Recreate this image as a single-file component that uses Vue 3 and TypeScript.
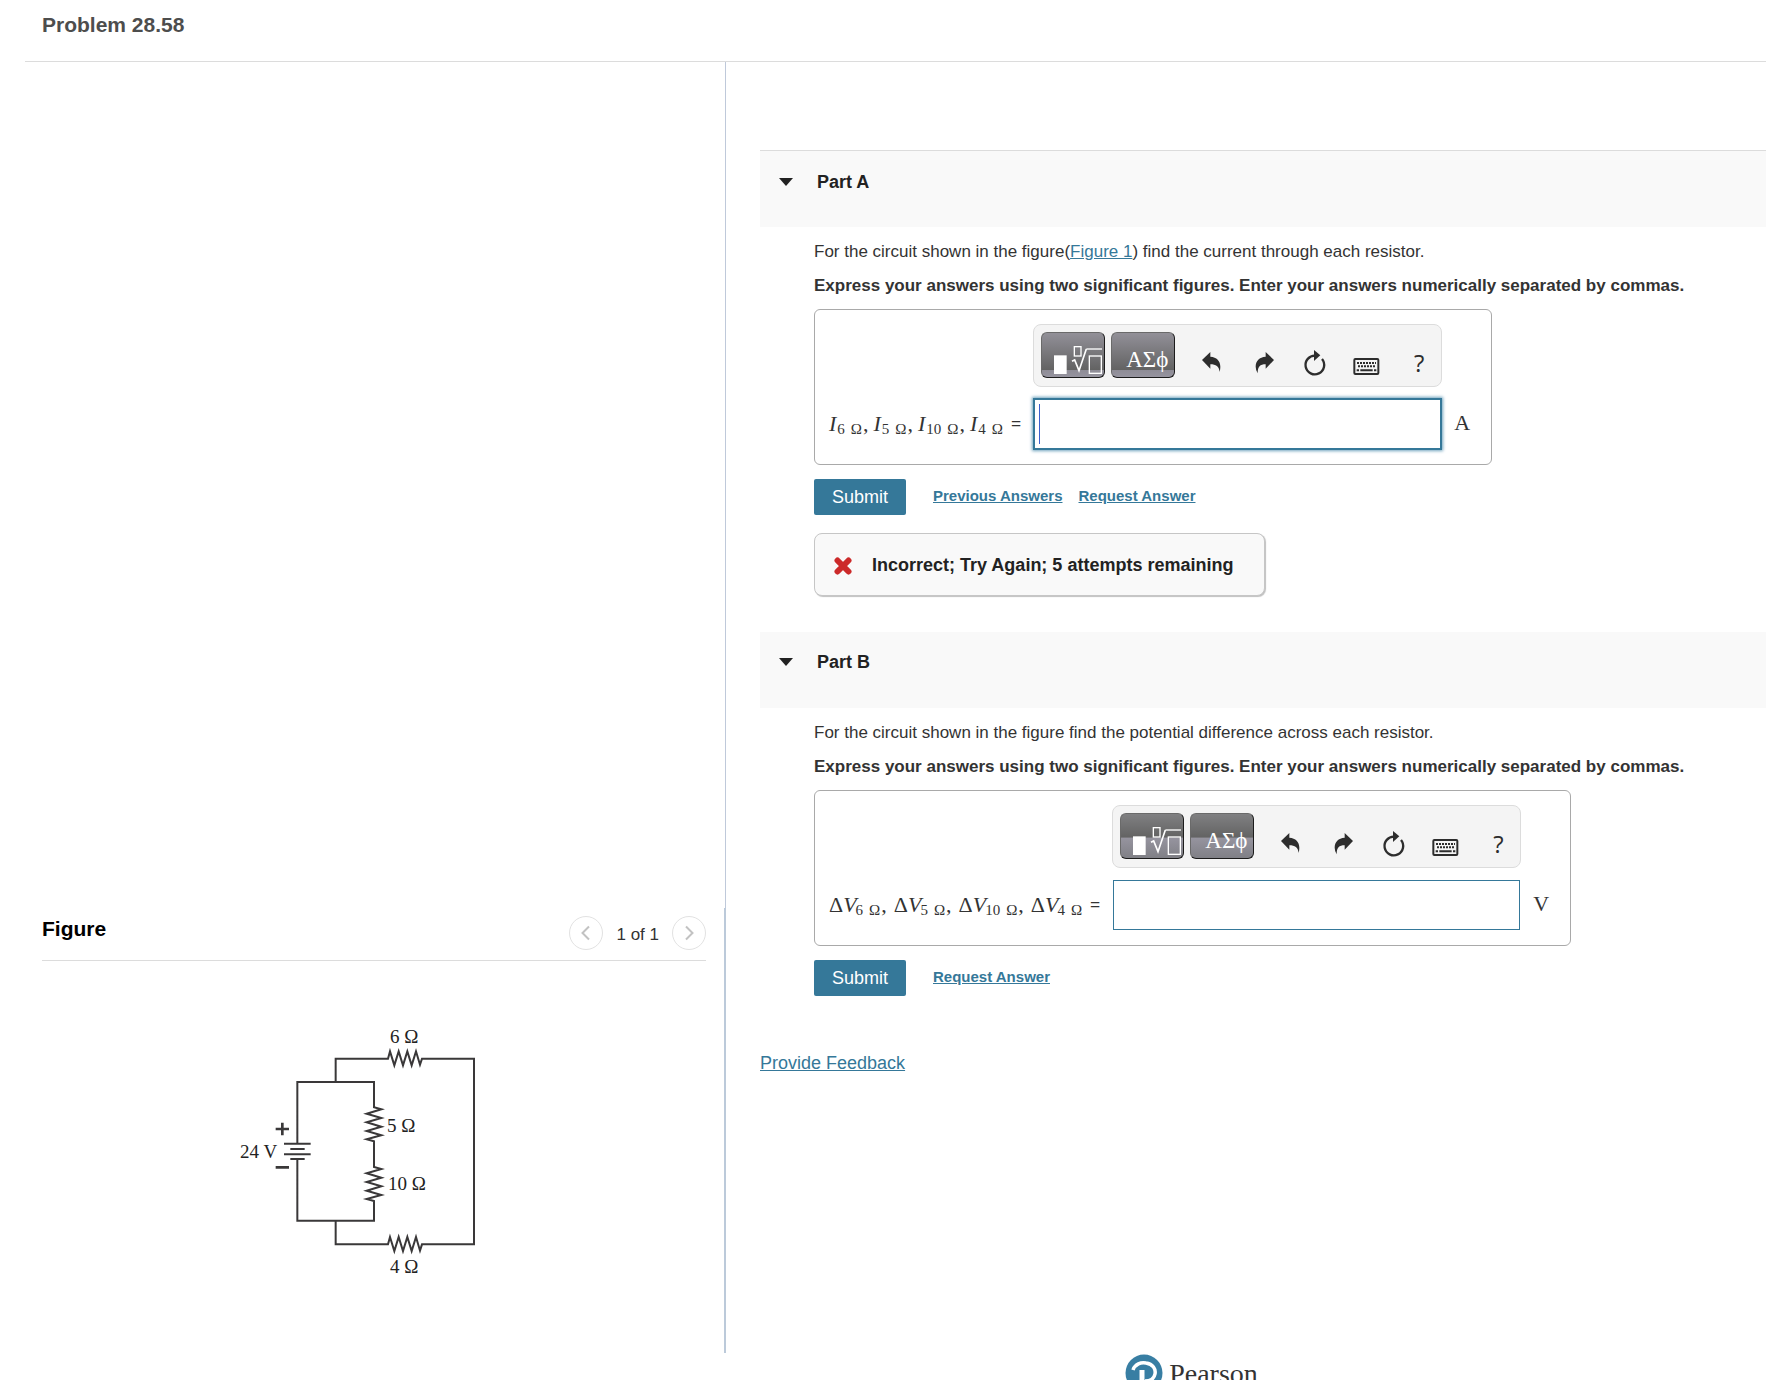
<script setup lang="ts">
import { ref } from 'vue'

interface Term {
  symbol: string
  delta: boolean
  value: string
}

interface Part {
  id: string
  title: string
  before: string
  figureLink: boolean
  after: string
  terms: Term[]
  unit: string
  active: boolean
  links: string[]
  feedback: string
}

const values = ['6', '5', '10', '4']
const hint =
  'Express your answers using two significant figures. Enter your answers numerically separated by commas.'

const parts: Part[] = [
  {
    id: 'a',
    title: 'Part A',
    before: 'For the circuit shown in the figure(',
    figureLink: true,
    after: ') find the current through each resistor.',
    terms: values.map((value) => ({ symbol: 'I', delta: false, value })),
    unit: 'A',
    active: true,
    links: ['Previous Answers', 'Request Answer'],
    feedback: 'Incorrect; Try Again; 5 attempts remaining',
  },
  {
    id: 'b',
    title: 'Part B',
    before: 'For the circuit shown in the figure find the potential difference across each resistor.',
    figureLink: false,
    after: '',
    terms: values.map((value) => ({ symbol: 'V', delta: true, value })),
    unit: 'V',
    active: false,
    links: ['Request Answer'],
    feedback: '',
  },
]

const answers = ref<Record<string, string>>({ a: '', b: '' })
</script>

<template>
  <div class="page">
    <header class="top">
      <h1>Problem 28.58</h1>
    </header>

    <main class="split">
      <section class="left">
        <div class="problem"></div>
        <div class="figure-panel">
          <div class="figure-head">
            <h2>Figure</h2>
            <div class="pager">
              <button type="button" class="round" aria-label="Previous figure">
                <svg viewBox="0 0 32 32"><path d="M19 9.500L12.500 16L19 22.500" /></svg>
              </button>
              <span>1 of 1</span>
              <button type="button" class="round" aria-label="Next figure">
                <svg viewBox="0 0 32 32"><path d="M13 9.500L19.500 16L13 22.500" /></svg>
              </button>
            </div>
          </div>
          <svg class="circuit" viewBox="0 0 840 840" role="img" aria-label="Circuit diagram">
            <g class="wire">
              <path d="M232 401V216H462V292L484 298L440 311L484 324L440 337L484 350L440 363L484 376L440 388L462 394V471L484 477L440 490L484 503L440 516L484 529L440 542L484 555L440 567L462 573V632H232V447" />
              <path d="M347 216V146H504L510 124L523 166L536 124L549 166L562 124L575 166L588 124L600 164L606 146H762V703H606L600 722L588 681L575 723L562 681L549 723L536 681L523 723L510 681L504 703H347V632" />
              <path d="M192 401H272M211 417H254M192 433H272M211 447H254" />
              <path d="M167 357H207M187 338V376M167 472H207" stroke-width="8" />
            </g>
            <g class="labels">
              <text x="510" y="99">6 Ω</text>
              <text x="501" y="365">5 Ω</text>
              <text x="504" y="541">10 Ω</text>
              <text x="510" y="788">4 Ω</text>
              <text x="60" y="444">24 V</text>
            </g>
          </svg>
        </div>
      </section>

      <section class="right">
        <article v-for="part in parts" :key="part.id" class="part">
          <div class="part-head" :class="{ first: part.active }">
            <svg class="caret" viewBox="0 0 14 8"><path d="M0 0H14L7 8Z" /></svg>
            <h3>{{ part.title }}</h3>
          </div>
          <div class="part-body">
            <p>{{ part.before }}<a v-if="part.figureLink" href="#figure">Figure 1</a>{{ part.after }}</p>
            <p class="hint">{{ hint }}</p>

            <div class="answer">
              <div class="toolbar">
                <button type="button" class="tool" :class="{ low: !part.active }" aria-label="Templates">
                  <svg viewBox="63 66 192 138">
                    <rect x="102" y="136" width="38" height="56" fill="#fff" />
                    <g fill="none" stroke="#fff" stroke-width="4">
                      <rect x="163" y="110" width="20" height="28" />
                      <rect x="208" y="138" width="36" height="52" />
                      <path d="M199 117H246" stroke-width="4" />
                      <path d="M156 154L164 150L177 182L199 117" stroke-width="5" />
                    </g>
                  </svg>
                </button>
                <button type="button" class="tool greek" :class="{ low: !part.active }">ΑΣϕ</button>
                <div class="icons">
                  <button type="button" aria-label="Undo">
                    <svg viewBox="531 111 84 96"><path d="M546 150L571 126V140C590 141 601 153 601 170Q601 178 599 186C597 169 588 163 571 163V176Z" /></svg>
                  </button>
                  <button type="button" aria-label="Redo">
                    <svg viewBox="687 111 84 96"><path d="M762 150L737 126V140C718 141 707 153 707 170Q707 180 713 190C713 170 720 163 737 163V176Z" /></svg>
                  </button>
                  <button type="button" aria-label="Reset">
                    <svg viewBox="843 111 84 96">
                      <path d="M886 137A28 28 0 1 0 906 147" fill="none" stroke="#2d2d2d" stroke-width="7" />
                      <path d="M882 120L901 136L882 153Z" />
                    </svg>
                  </button>
                  <button type="button" aria-label="Keyboard shortcuts">
                    <svg viewBox="999 111 84 96">
                      <g fill="none" stroke="#2d2d2d">
                        <rect x="1003" y="147" width="72" height="45" rx="3" stroke-width="6" />
                        <path d="M1011 159H1068" stroke-width="6" stroke-dasharray="6 3" />
                        <path d="M1014 169H1068" stroke-width="6" stroke-dasharray="6 3" />
                        <path d="M1010 181H1017M1021 181H1058M1062 181H1069" stroke-width="6" />
                      </g>
                    </svg>
                  </button>
                  <button type="button" class="help">?</button>
                </div>
              </div>
              <label class="expr" :for="'answer-' + part.id">
                <span v-for="(term, i) in part.terms" :key="term.value" class="term" :class="{ volt: term.delta }"><span v-if="term.delta" class="delta">Δ</span><i>{{ term.symbol }}</i><sub>{{ term.value }}</sub><sub class="ohm">Ω</sub><span v-if="i < part.terms.length - 1" class="comma">,</span></span>
                <span class="eq">=</span>
              </label>
              <div class="field" :class="{ active: part.active }">
                <input :id="'answer-' + part.id" v-model="answers[part.id]" type="text" />
                <span v-if="part.active" class="cursor"></span>
              </div>
              <span class="unit">{{ part.unit }}</span>
            </div>

            <div class="actions">
              <button type="button" class="submit">Submit</button>
              <a v-for="link in part.links" :key="link" href="#answers">{{ link }}</a>
            </div>

            <div v-if="part.feedback" class="feedback">
              <svg viewBox="0 0 18 18"><path d="M3.500 3.500L14.500 14.500M14.500 3.500L3.500 14.500" /></svg>
              <span>{{ part.feedback }}</span>
            </div>
          </div>
        </article>
        <a class="provide" href="#feedback">Provide Feedback</a>
      </section>
    </main>

    <footer class="foot">
      <svg viewBox="0 0 38 38">
        <circle cx="19" cy="19" r="18.500" fill="#387ea3" />
        <path d="M8 16C10 10 16 8 21 9C28 10 31 15 30 20C29 25 25 27 20 27" fill="none" stroke="#fff" stroke-width="3.500" />
        <path d="M17 16V30" fill="none" stroke="#fff" stroke-width="5" />
      </svg>
      <span>Pearson</span>
    </footer>
  </div>
</template>

<style>
body {
  margin: 0;
  background: #fff;
}
</style>

<style scoped>
.page {
  display: flex;
  flex-direction: column;
  height: 100vh;
  overflow: hidden;
  font-family: "Liberation Sans", Arial, Helvetica, sans-serif;
  font-size: 17px;
  color: #333;
}
h1, h2, h3, p {
  margin: 0;
}
button {
  font-family: inherit;
  padding: 0;
  border: 0;
  background: none;
}
a {
  color: #357899;
}
.top {
  flex: none;
  box-sizing: border-box;
  height: 62px;
  margin-left: 25px;
  padding: 13px 0 0 17px;
  border-bottom: 1px solid #dcdcdc;
}
h1 {
  font-size: 21px;
  line-height: 24px;
  color: #4d4d4d;
}
.split {
  flex: 1;
  min-height: 0;
  display: flex;
}
.left {
  flex: 0 0 726px;
  display: flex;
  flex-direction: column;
  box-sizing: border-box;
}
.problem {
  flex: 1;
  border-right: 1px solid #bfc9da;
}
.figure-panel {
  flex: none;
  padding: 8px 18px 63px 42px;
  border-right: 2px solid #bccada;
}
.figure-head {
  display: flex;
  justify-content: space-between;
  height: 44px;
  border-bottom: 1px solid #dcdcdc;
}
h2 {
  font-size: 21px;
  line-height: 26px;
  color: #000;
}
.pager {
  display: flex;
  gap: 13px;
  line-height: 38px;
  font-size: 17px;
}
.round {
  width: 34px;
  height: 34px;
  box-sizing: border-box;
  border: 1px solid #e2e2e2;
  border-radius: 50%;
}
.round svg {
  display: block;
  width: 32px;
  height: 32px;
}
.round path {
  fill: none;
  stroke: #c2c2c2;
  stroke-width: 2;
}
.circuit {
  display: block;
  width: 280px;
  height: 280px;
  margin: 49px 0 0 178px;
}
.wire {
  fill: none;
  stroke: #3a3839;
  stroke-width: 6;
}
.labels {
  font-family: "Liberation Serif", "Times New Roman", serif;
  font-size: 57px;
  fill: #222;
}
.right {
  flex: 1;
  min-width: 0;
  padding: 88px 0 0 34px;
}
.part {
  margin-bottom: 36px;
}
.part-head {
  display: flex;
  align-items: flex-start;
  box-sizing: border-box;
  height: 76px;
  padding: 17px 0 0 19px;
  background: #f9f9f9;
}
.part-head.first {
  height: 77px;
  padding-top: 18px;
  border-top: 1px solid #dcdcdc;
}
.caret {
  width: 14px;
  height: 8px;
  margin: 9px 24px 0 0;
  fill: #222;
}
h3 {
  font-size: 18px;
  line-height: 26px;
  color: #222;
}
.part-body {
  padding: 8px 0 0 54px;
}
p {
  line-height: 34px;
  white-space: nowrap;
}
.hint {
  font-weight: bold;
}
.answer {
  display: inline-grid;
  grid-template-columns: auto 409px 14px;
  column-gap: 12px;
  row-gap: 11px;
  box-sizing: border-box;
  margin-top: 6px;
  padding: 14px 23px 14px 14px;
  border: 1px solid #a9a9a9;
  border-radius: 6px;
  vertical-align: top;
}
.toolbar {
  grid-column: 2;
  display: flex;
  box-sizing: border-box;
  height: 63px;
  padding: 7px;
  border: 1px solid #dcdcdc;
  border-radius: 8px;
  background: #f4f4f4;
}
.tool {
  width: 64px;
  height: 46px;
  box-sizing: border-box;
  margin-right: 6px;
  border: 1px solid #6a6a6a;
  border-right: 1px solid #1c1c1c;
  border-bottom: 1px solid #1c1c1c;
  border-radius: 6px;
  background: linear-gradient(#929098 0%, #636363 83%, #8e8c96 84%, #96949f 100%);
}
.tool.low {
  background: linear-gradient(#808082 0%, #636363 53%, #96949f 54%, #808086 100%);
}
.tool svg {
  display: block;
  width: 64px;
  height: 46px;
  margin: -1px;
}
.greek {
  padding: 10px 0 0 8px;
  font-family: "Liberation Serif", "Times New Roman", serif;
  font-size: 23px;
  line-height: 26px;
  color: #fff;
}
.icons {
  display: flex;
  align-items: flex-end;
  gap: 24px;
  margin-left: 16px;
}
.icons button {
  flex: none;
  width: 28px;
  height: 32px;
  color: #2d2d2d;
}
.icons svg {
  display: block;
  width: 28px;
  height: 32px;
  fill: #2d2d2d;
}
.icons .help {
  font-family: "Open Sans", sans-serif;
  font-size: 24px;
  line-height: 32px;
}
.expr {
  grid-column: 1;
  display: flex;
  align-items: center;
  font-family: "Liberation Serif", "Times New Roman", serif;
  font-size: 22px;
  white-space: nowrap;
}
.term {
  margin-right: 5px;
}
.term.volt {
  margin-right: 7px;
}
.term:nth-last-child(2) {
  margin-right: 8px;
}
.term i {
  display: inline-block;
  margin-right: 1px;
}
.volt i {
  margin-right: -1px;
}
.term sub {
  font-size: 15px;
  line-height: 16px;
  vertical-align: -3px;
}
.term .ohm {
  margin-left: 6px;
}
.comma {
  margin-left: 1px;
}
.eq {
  font-size: 18px;
  font-weight: bold;
}
.field {
  position: relative;
  display: flex;
}
.field input {
  flex: 1;
  min-width: 0;
  height: 50px;
  margin: 1px;
  padding: 0 6px;
  box-sizing: border-box;
  border: 1px solid #357899;
  border-radius: 0;
  background: #fff;
  font-size: 20px;
  outline: none;
}
.field.active input {
  height: 52px;
  margin: 0;
  border-width: 2px;
  box-shadow: 0 0 3px 1px #6fa3bd;
}
.cursor {
  position: absolute;
  left: 6px;
  top: 6px;
  width: 1px;
  height: 40px;
  background: #3a5fcd;
}
.unit {
  font-family: "Liberation Serif", "Times New Roman", serif;
  font-size: 22px;
  line-height: 50px;
}
.actions {
  display: flex;
  align-items: center;
  gap: 16px;
  margin-top: 14px;
  font-size: 15px;
  font-weight: bold;
}
.actions a {
  padding-bottom: 3px;
}
.submit {
  width: 92px;
  height: 36px;
  margin-right: 11px;
  border-radius: 2px;
  background: #357899;
  color: #fff;
  font-size: 18px;
}
.feedback {
  display: flex;
  align-items: center;
  width: max-content;
  min-width: 451px;
  box-sizing: border-box;
  height: 63px;
  margin-top: 18px;
  padding: 2px 18px 0 19px;
  gap: 20px;
  border: 1px solid #c6c6c6;
  border-radius: 8px;
  background: #f9f9f9;
  box-shadow: 1px 1px 1px #c0c0c0;
  font-size: 18px;
  font-weight: bold;
  color: #222;
}
.feedback svg {
  width: 18px;
  height: 18px;
}
.feedback path {
  stroke: #cc2a2a;
  stroke-width: 6;
  stroke-linecap: round;
}
.provide {
  display: inline-block;
  margin-top: 19px;
  font-size: 18px;
  line-height: 24px;
}
.foot {
  flex: none;
  display: flex;
  align-items: flex-start;
  justify-content: center;
  gap: 6px;
  height: 27px;
  margin-left: 617px;
  padding-top: 1px;
  box-sizing: border-box;
  font-family: "Liberation Serif", "Times New Roman", serif;
  font-size: 28px;
  line-height: 40px;
  color: #333;
}
.foot svg {
  flex: none;
  width: 38px;
  height: 38px;
}
</style>
